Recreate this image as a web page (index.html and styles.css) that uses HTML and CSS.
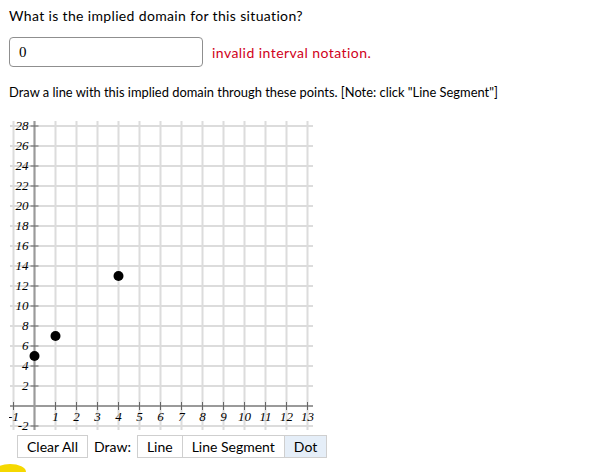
FILE: index.html
```html
<!DOCTYPE html>
<html lang="en">
<head>
    <meta charset="UTF-8">
    <title>Implied domain</title>
    <link rel="stylesheet" href="styles.css">
</head>
<body>
    <div class="page">
        <p class="question">What is the implied domain for this situation?</p>
        <div class="answer-row">
            <input class="answer" type="text" value="0">
            <span class="error">invalid interval notation.</span>
        </div>
        <p class="prompt">Draw a line with this implied domain through these points. [Note: click "Line Segment"]</p>
        <div class="graph">
            <svg id="plot" width="310" height="318"></svg>
        </div>
        <div class="toolbar">
            <button class="tool">Clear All</button>
            <span class="tool-label">Draw:</span>
            <div class="tool-group">
                <button class="tool">Line</button>
                <button class="tool">Line Segment</button>
                <button class="tool active">Dot</button>
            </div>
        </div>
    </div>
    <div class="help-dot"></div>

    <script>
        // svg sits at page (9, 116)
        const svg = document.getElementById("plot");
        const NS = "http://www.w3.org/2000/svg";
        const X = x => 25.5 + 21 * x;
        const Y = y => 290 - 10 * y;
        const gLeft = 1, gRight = 304, gTop = 5, gBottom = 314;

        function add(tag, attrs, text) {
            const el = document.createElementNS(NS, tag);
            for (const k in attrs) el.setAttribute(k, attrs[k]);
            if (text !== undefined) el.textContent = text;
            svg.appendChild(el);
            return el;
        }

        // grid
        for (let x = -1; x <= 13; x++) {
            add("line", { x1: X(x), y1: gTop, x2: X(x), y2: gBottom, class: "grid" });
        }
        for (let y = -2; y <= 28; y += 2) {
            add("line", { x1: gLeft, y1: Y(y), x2: gRight, y2: Y(y), class: "grid" });
        }

        // axes
        add("line", { x1: gLeft, y1: Y(0), x2: gRight, y2: Y(0), class: "axis" });
        add("line", { x1: X(0), y1: gTop, x2: X(0), y2: gBottom, class: "axis" });

        // ticks and labels
        for (let x = -1; x <= 13; x++) {
            if (x === 0) continue;
            add("line", { x1: X(x), y1: Y(0) - 4, x2: X(x), y2: Y(0) + 4, class: "tick" });
            add("text", { x: X(x), y: Y(0) + 15, class: "label", "text-anchor": "middle" }, x);
        }
        for (let y = -2; y <= 28; y += 2) {
            if (y === 0) continue;
            add("line", { x1: X(0) - 4, y1: Y(y), x2: X(0) + 4, y2: Y(y), class: "tick" });
            add("text", { x: X(0) - 6, y: Y(y) + 4, class: "label", "text-anchor": "end" }, y);
        }

        // points
        [[0, 5], [1, 7], [4, 13]].forEach(p => {
            add("circle", { cx: X(p[0]), cy: Y(p[1]), r: 5, class: "point" });
        });
    </script>
</body>
</html>
```

FILE: styles.css
```css
body {
    margin: 0;
    font-family: Lato, "DejaVu Sans", sans-serif;
    font-size: 14px;
    color: #000;
    background: #fff;
    overflow: hidden;
}
.page {
    padding: 7px 9px 0 9px;
}
.question {
    margin: 0;
    line-height: 17px;
    letter-spacing: 0.35px;
}
.answer-row {
    display: flex;
    align-items: center;
    margin-top: 13px;
}
.answer {
    box-sizing: border-box;
    width: 194px;
    height: 30px;
    border: 1px solid #8f8f8f;
    border-radius: 4px;
    padding: 0 9px;
    font-family: "Liberation Serif", serif;
    font-size: 15px;
    color: #000;
}
.error {
    margin-left: 9px;
    color: #d00020;
    letter-spacing: 0.45px;
}
.prompt {
    margin: 17px 0 0 0;
    line-height: 17px;
    font-size: 12.9px;
}
.graph {
    margin-top: 15px;
    height: 318px;
}
.graph svg {
    display: block;
}
.grid {
    stroke: #dcdcdc;
    stroke-width: 2;
}
.axis {
    stroke: #9a9a9a;
    stroke-width: 2;
}
.tick {
    stroke: #666;
    stroke-width: 1;
}
.label {
    font-family: "Liberation Serif", serif;
    font-style: italic;
    font-size: 13px;
    fill: #000;
}
.point {
    fill: #000;
}
.toolbar {
    display: flex;
    align-items: center;
    margin: 1px 0 0 8px;
}
.tool {
    font-family: Lato, "DejaVu Sans", sans-serif;
    font-size: 14px;
    height: 23px;
    padding: 0 9px;
    background: #fff;
    border: 1px solid #cfcfcf;
    color: #000;
    cursor: pointer;
}
.tool-group {
    display: flex;
}
.tool-group .tool + .tool {
    margin-left: -1px;
}
.tool.active {
    background: #e5eef8;
}
.tool-label {
    margin: 0 6px 0 6px;
}
.help-dot {
    position: absolute;
    left: -6px;
    top: 464px;
    width: 32px;
    height: 8px;
    border-radius: 16px 16px 0 0 / 8px 8px 0 0;
    background: #f5d800;
}
```
